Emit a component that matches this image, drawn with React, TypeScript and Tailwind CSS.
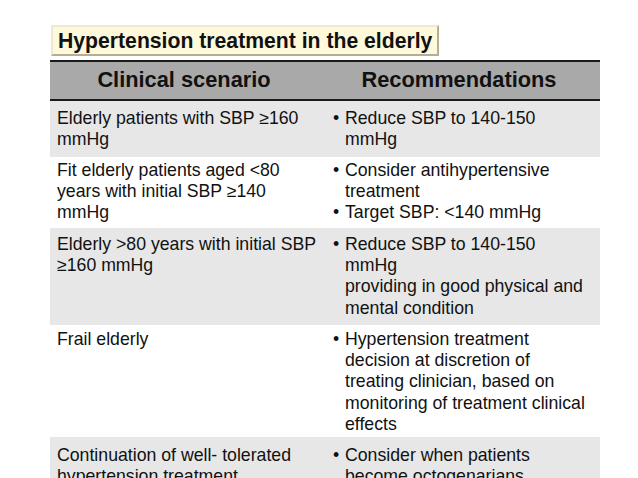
const rows: { left: string[]; right: string[][]; grey: boolean; box: string }[] = [
  {
    left: ['Elderly patients with SBP ≥160', 'mmHg'],
    right: [['Reduce SBP to 140-150', 'mmHg']],
    grey: true,
    box: 'h-[56px] pt-[7px]',
  },
  {
    left: ['Fit elderly patients aged <80', 'years with initial SBP ≥140', 'mmHg'],
    right: [['Consider antihypertensive', 'treatment'], ['Target SBP: <140 mmHg']],
    grey: false,
    box: 'h-[71px] pt-[3px]',
  },
  {
    left: ['Elderly >80 years with initial SBP', '≥160 mmHg'],
    right: [['Reduce SBP to 140-150', 'mmHg', 'providing in good physical and', 'mental condition']],
    grey: true,
    box: 'h-[97px] pt-[6px]',
  },
  {
    left: ['Frail elderly'],
    right: [
      [
        'Hypertension treatment',
        'decision at discretion of',
        'treating clinician, based on',
        'monitoring of treatment clinical',
        'effects',
      ],
    ],
    grey: false,
    box: 'h-[112px] pt-[4px]',
  },
  {
    left: ['Continuation of well- tolerated', 'hypertension treatment'],
    right: [['Consider when patients', 'become octogenarians']],
    grey: true,
    box: 'h-[60px] pt-[8px]',
  },
];

export default function App() {
  return (
    <div className="w-[638px] h-[478px] overflow-hidden bg-white font-['Liberation_Sans',Arial,sans-serif] text-[#111]">
      <div className="pt-[25px] pl-[51px]">
        <div className="inline-block border-2 border-t-[#efe9cf] border-l-[#efe9cf] border-r-[#b5ae94] border-b-[#b5ae94] bg-[#fdf9da] px-[5px] h-[31px] leading-[27px] text-[21.2px] font-bold whitespace-nowrap">
          Hypertension treatment in the elderly
        </div>
      </div>

      <div className="ml-[50px] mt-[4px] w-[550px]">
        <div className="flex h-[41px] items-center border-y-2 border-[#1a1a1a] bg-[#a9a9a9] text-[21.8px] font-bold">
          <div className="w-[268px] text-center">Clinical scenario</div>
          <div className="flex-1 text-center">Recommendations</div>
        </div>

        {rows.map((row, i) => (
          <div
            key={i}
            className={`flex ${row.box} text-[17.7px] leading-[21.2px] ${row.grey ? 'bg-[#e7e7e7]' : 'bg-white'}`}
          >
            <div className="w-[276px] pl-[7px] whitespace-nowrap">
              {row.left.map((l) => (
                <div key={l}>{l}</div>
              ))}
            </div>
            <div className="flex-1 pl-[7px] whitespace-nowrap">
              {row.right.map((item, j) => (
                <div key={j} className="flex">
                  <span className="w-[12px] shrink-0">•</span>
                  <div>
                    {item.map((l) => (
                      <div key={l}>{l}</div>
                    ))}
                  </div>
                </div>
              ))}
            </div>
          </div>
        ))}
      </div>
    </div>
  );
}
